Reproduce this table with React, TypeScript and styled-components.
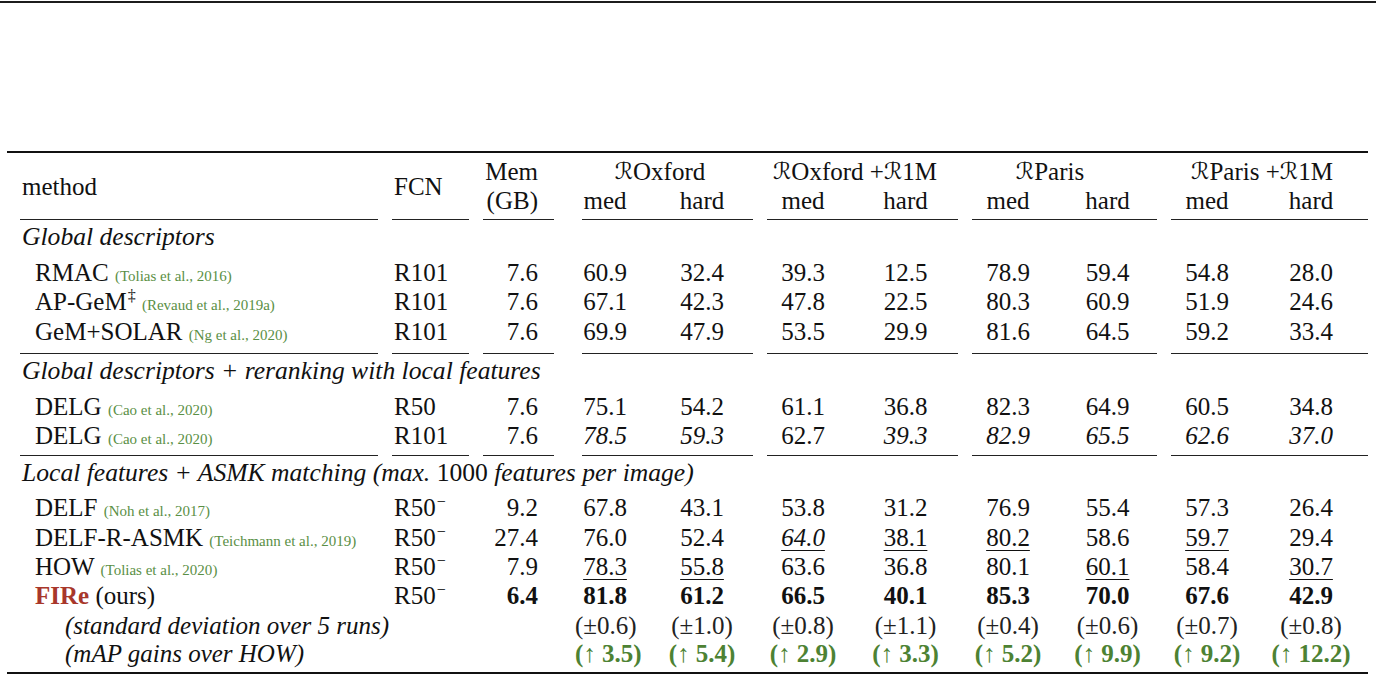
import React from "react";
import styled, { createGlobalStyle } from "styled-components";

const GlobalStyle = createGlobalStyle`
  html, body {
    margin: 0;
    padding: 0;
    background: #fff;
  }
  body {
    font-family: "Liberation Serif", "Times New Roman", serif;
    color: #111;
  }
`;

const COLS =
  "378px 91px 85px 14px 60px 125px 86px 119px 86px 113px 90px 114px";

// padding per value column (left > 0, right < 0) to put centers where the paper has them
const SHIFTS = [0, 9, 0, 0, 0, 0, -4, 0];

type Cell = { v: string; i?: boolean; u?: boolean };

interface IRow {
  name: string;
  sup?: string;
  cite?: string;
  fcn: string;
  minus?: boolean;
  mem: string;
  vals: Cell[];
  fire?: boolean;
}

const c = (s: string): Cell[] =>
  s.split(" ").map((t) => ({
    v: t.replace(/[iu]+$/, ""),
    i: /i/.test(t.replace(/^[\d.]+/, "")),
    u: /u/.test(t.replace(/^[\d.]+/, "")),
  }));

const SECTIONS: { title: React.ReactNode; gap: number; rows: IRow[] }[] = [
  {
    title: "Global descriptors",
    gap: 7,
    rows: [
      {
        name: "RMAC",
        cite: "Tolias et al., 2016",
        fcn: "R101",
        mem: "7.6",
        vals: c("60.9 32.4 39.3 12.5 78.9 59.4 54.8 28.0"),
      },
      {
        name: "AP-GeM",
        sup: "‡",
        cite: "Revaud et al., 2019a",
        fcn: "R101",
        mem: "7.6",
        vals: c("67.1 42.3 47.8 22.5 80.3 60.9 51.9 24.6"),
      },
      {
        name: "GeM+SOLAR",
        cite: "Ng et al., 2020",
        fcn: "R101",
        mem: "7.6",
        vals: c("69.9 47.9 53.5 29.9 81.6 64.5 59.2 33.4"),
      },
    ],
  },
  {
    title: "Global descriptors + reranking with local features",
    gap: 5,
    rows: [
      {
        name: "DELG",
        cite: "Cao et al., 2020",
        fcn: "R50",
        mem: "7.6",
        vals: c("75.1 54.2 61.1 36.8 82.3 64.9 60.5 34.8"),
      },
      {
        name: "DELG",
        cite: "Cao et al., 2020",
        fcn: "R101",
        mem: "7.6",
        vals: c("78.5i 59.3i 62.7 39.3i 82.9i 65.5i 62.6i 37.0i"),
      },
    ],
  },
];

const LOCAL_ROWS: IRow[] = [
  {
    name: "DELF",
    cite: "Noh et al., 2017",
    fcn: "R50",
    minus: true,
    mem: "9.2",
    vals: c("67.8 43.1 53.8 31.2 76.9 55.4 57.3 26.4"),
  },
  {
    name: "DELF-R-ASMK",
    cite: "Teichmann et al., 2019",
    fcn: "R50",
    minus: true,
    mem: "27.4",
    vals: c("76.0 52.4 64.0iu 38.1u 80.2u 58.6 59.7u 29.4"),
  },
  {
    name: "HOW",
    cite: "Tolias et al., 2020",
    fcn: "R50",
    minus: true,
    mem: "7.9",
    vals: c("78.3u 55.8u 63.6 36.8 80.1 60.1u 58.4 30.7u"),
  },
  {
    name: "FIRe",
    fcn: "R50",
    minus: true,
    mem: "6.4",
    fire: true,
    vals: c("81.8 61.2 66.5 40.1 85.3 70.0 67.6 42.9"),
  },
];

const STD = ["0.6", "1.0", "0.8", "1.1", "0.4", "0.6", "0.7", "0.8"];
const GAINS = ["3.5", "5.4", "2.9", "3.3", "5.2", "9.9", "9.2", "12.2"];

const Page = styled.div`
  padding-top: 1px;
  width: 1376px;
`;

const PageRule = styled.div`
  height: 2px;
  background: #1c1c1c;
`;

const Table = styled.div`
  margin: 148px 0 0 7px;
  width: 1361px;
  font-size: 25px;
`;

const HeavyRule = styled.div<{ $top?: number }>`
  height: 2px;
  margin-top: ${({ $top }) => $top ?? 0}px;
  background: #111;
`;

const Header = styled.div`
  display: grid;
  grid-template-columns: ${COLS};
  grid-template-rows: 29px 29px;
  padding-top: 4px;
  line-height: 29px;
`;

const HeadCell = styled.div<{
  $col: string;
  $row: string;
  $align?: string;
  $pl?: number;
  $pr?: number;
}>`
  grid-column: ${({ $col }) => $col};
  grid-row: ${({ $row }) => $row};
  display: flex;
  align-items: center;
  justify-content: ${({ $align }) => $align ?? "center"};
  padding-left: ${({ $pl }) => $pl ?? 0}px;
  padding-right: ${({ $pr }) => $pr ?? 0}px;
  white-space: nowrap;
`;

const Script = styled.span`
  font-family: "DejaVu Serif", "DejaVu Sans", serif;
  font-style: italic;
  font-size: 23px;
`;

const RuleRow = styled.div<{ $gap: number }>`
  display: grid;
  grid-template-columns: ${COLS};
  height: 1px;
  margin-top: ${({ $gap }) => $gap}px;
`;

const Seg = styled.div<{ $col: string; $ml?: number; $mr?: number }>`
  grid-column: ${({ $col }) => $col};
  margin-left: ${({ $ml }) => $ml ?? 7}px;
  margin-right: ${({ $mr }) => $mr ?? 7}px;
  background: #222;
`;

const SectionTitle = styled.div<{ $after?: number }>`
  height: 28px;
  line-height: 28px;
  margin: 3px 0 ${({ $after }) => $after ?? 7}px;
  padding-left: 15px;
  font-size: 25.6px;
  font-style: italic;
  white-space: nowrap;
`;

const Upright = styled.span`
  font-style: normal;
`;

const Row = styled.div<{ $h?: number }>`
  display: grid;
  grid-template-columns: ${COLS};
  height: ${({ $h }) => $h ?? 29.3}px;
  line-height: ${({ $h }) => $h ?? 29.3}px;
  white-space: nowrap;
`;

const NameCell = styled.div<{ $indent?: number; $italic?: boolean }>`
  padding-left: ${({ $indent }) => $indent ?? 28}px;
  font-style: ${({ $italic }) => ($italic ? "italic" : "normal")};
`;

const Cite = styled.span`
  font-size: 15px;
  color: #5a8f45;
`;

const Sup = styled.span`
  position: relative;
  top: -9px;
  font-size: 16px;
  line-height: 0;
  margin-left: 1px;
`;

const FcnCell = styled.div`
  padding-left: 9px;
`;

const MemCell = styled.div<{ $bold?: boolean }>`
  text-align: right;
  padding-right: 23px;
  font-weight: ${({ $bold }) => ($bold ? 700 : 400)};
`;

const Gap = styled.div``;

const ValCell = styled.div<{ $shift: number; $bold?: boolean }>`
  text-align: center;
  padding-left: ${({ $shift }) => Math.max($shift, 0)}px;
  padding-right: ${({ $shift }) => Math.max(-$shift, 0)}px;
  font-weight: ${({ $bold }) => ($bold ? 700 : 400)};
`;

const Num = styled.span<{ $i?: boolean; $u?: boolean }>`
  font-style: ${({ $i }) => ($i ? "italic" : "normal")};
  text-decoration: ${({ $u }) => ($u ? "underline" : "none")};
  text-decoration-thickness: 1px;
  text-underline-offset: 4px;
`;

const Fire = styled.span`
  color: #a8372b;
  font-weight: 700;
`;

const Std = styled.span`
  color: #222;
`;

const Gain = styled.span`
  color: #4d8233;
  font-weight: 700;
`;

const Arrow = styled.span`
  font-weight: 400;
`;

const GroupRule = ({ gap }: { gap: number }) => (
  <RuleRow $gap={gap}>
    <Seg $col="1" $ml={13} />
    <Seg $col="2" />
    <Seg $col="3" />
    <Seg $col="5 / 7" />
    <Seg $col="7 / 9" />
    <Seg $col="9 / 11" />
    <Seg $col="11 / 13" $mr={0} />
  </RuleRow>
);

const DataRow = ({ row }: { row: IRow }) => (
  <Row>
    <NameCell>
      {row.fire ? (
        <>
          <Fire>FIRe</Fire> (ours)
        </>
      ) : (
        <>
          {row.name}
          {row.sup && <Sup>{row.sup}</Sup>} <Cite>({row.cite})</Cite>
        </>
      )}
    </NameCell>
    <FcnCell>
      {row.fcn}
      {row.minus && <Sup>−</Sup>}
    </FcnCell>
    <MemCell $bold={row.fire}>{row.mem}</MemCell>
    <Gap />
    {row.vals.map((v, idx) => (
      <ValCell key={idx} $shift={SHIFTS[idx]} $bold={row.fire}>
        <Num $i={v.i} $u={v.u}>
          {v.v}
        </Num>
      </ValCell>
    ))}
  </Row>
);

const App = () => {
  const groups = [
    { col: "5 / 7", pr: 15, label: <><Script>ℛ</Script>Oxford</> },
    { col: "7 / 9", pr: 15, label: <><Script>ℛ</Script>Oxford +<Script>ℛ</Script>1M</> },
    { col: "9 / 11", pr: 29, label: <><Script>ℛ</Script>Paris</> },
    { col: "11 / 13", pr: 8, label: <><Script>ℛ</Script>Paris +<Script>ℛ</Script>1M</> },
  ];
  return (
    <Page>
      <GlobalStyle />
      <PageRule />
      <Table>
        <HeavyRule />
        <Header>
          <HeadCell $col="1" $row="1 / 3" $align="flex-start" $pl={15}>
            method
          </HeadCell>
          <HeadCell $col="2" $row="1 / 3" $align="flex-start" $pl={9}>
            FCN
          </HeadCell>
          <HeadCell $col="3" $row="1" $align="flex-end" $pr={23}>
            Mem
          </HeadCell>
          <HeadCell $col="3" $row="2" $align="flex-end" $pr={23}>
            (GB)
          </HeadCell>
          {groups.map((g) => (
            <HeadCell key={g.col} $col={g.col} $row="1" $pr={g.pr}>
              {g.label}
            </HeadCell>
          ))}
          {SHIFTS.map((s, idx) => (
            <HeadCell
              key={idx}
              $col={String(5 + idx)}
              $row="2"
              $pl={Math.max(s, 0)}
              $pr={Math.max(-s, 0)}
            >
              {idx % 2 === 0 ? "med" : "hard"}
            </HeadCell>
          ))}
        </Header>
        <GroupRule gap={4} />
        {SECTIONS.map((sec, sIdx) => (
          <React.Fragment key={sIdx}>
            <SectionTitle>{sec.title}</SectionTitle>
            {sec.rows.map((r, idx) => (
              <DataRow key={idx} row={r} />
            ))}
            <GroupRule gap={sec.gap} />
          </React.Fragment>
        ))}
        <SectionTitle $after={6}>
          Local features + ASMK matching (max. <Upright>1000</Upright> features
          per image)
        </SectionTitle>
        {LOCAL_ROWS.map((r, idx) => (
          <DataRow key={idx} row={r} />
        ))}
        <Row>
          <NameCell $indent={58} $italic>
            (standard deviation over 5 runs)
          </NameCell>
          <Gap />
          <Gap />
          <Gap />
          {STD.map((s, idx) => (
            <ValCell key={idx} $shift={SHIFTS[idx]}>
              <Std>(±{s})</Std>
            </ValCell>
          ))}
        </Row>
        <Row $h={28.3}>
          <NameCell $indent={58} $italic>
            (mAP gains over HOW)
          </NameCell>
          <Gap />
          <Gap />
          <Gap />
          {GAINS.map((s, idx) => (
            <ValCell key={idx} $shift={SHIFTS[idx]}>
              <Gain>
                (<Arrow>↑</Arrow> {s})
              </Gain>
            </ValCell>
          ))}
        </Row>
        <HeavyRule $top={4} />
      </Table>
    </Page>
  );
};

export default App;
